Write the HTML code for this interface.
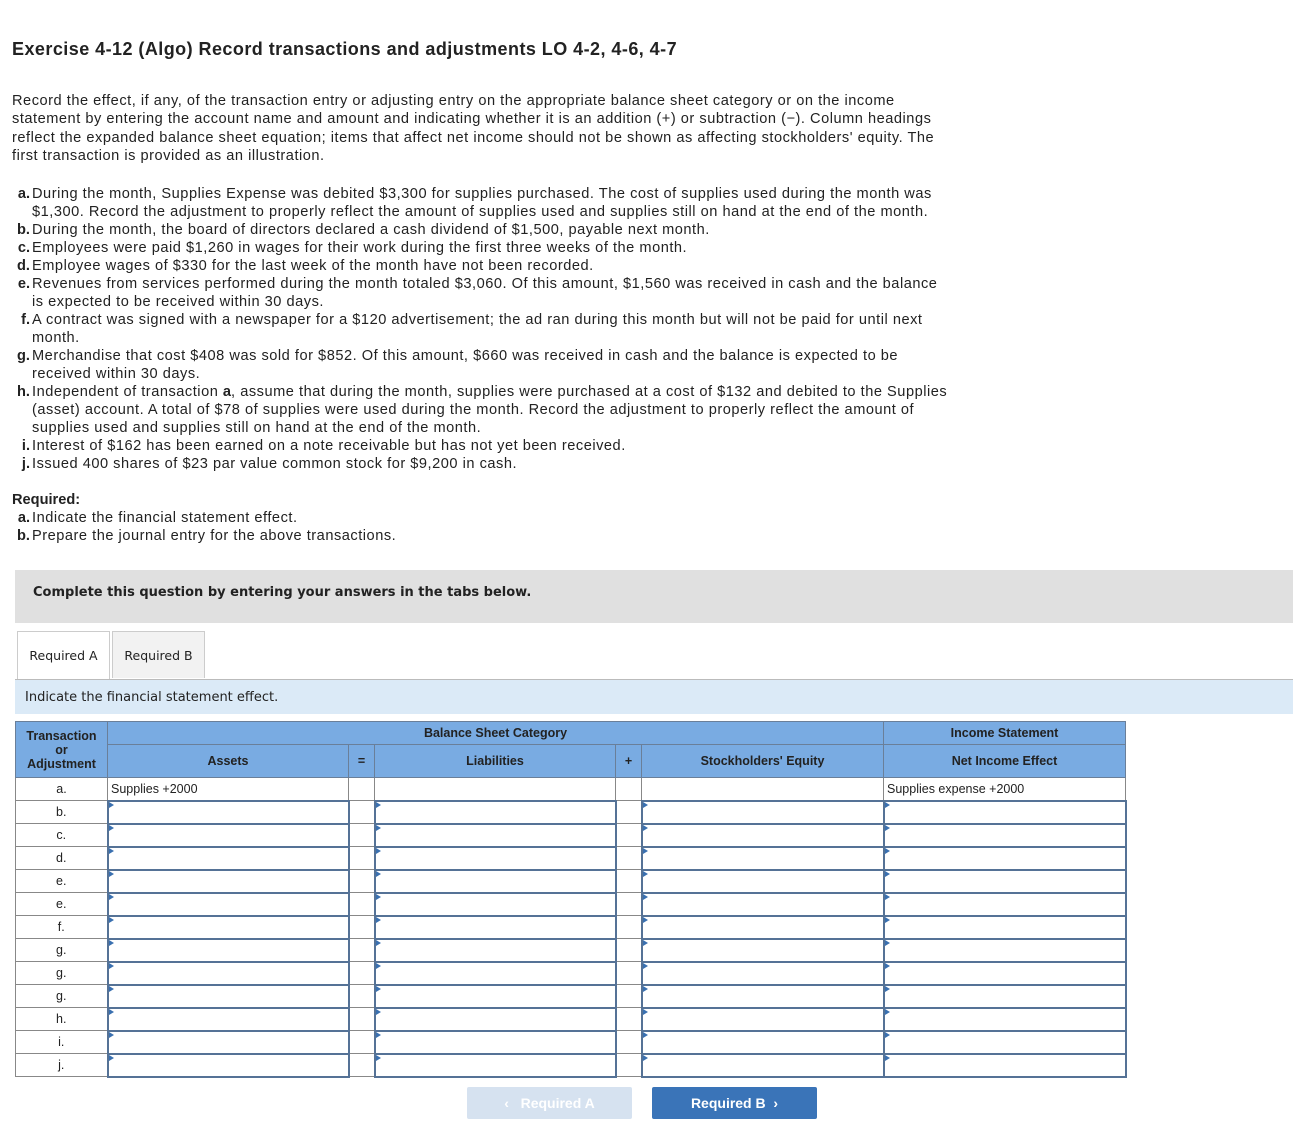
<!DOCTYPE html>
<html><head><meta charset="utf-8"><style>
body{margin:0;background:#fff;font-family:"Liberation Sans",Arial,sans-serif;color:#222;width:1310px;height:1133px;position:relative;overflow:hidden}
.a{position:absolute}
h1{position:absolute;left:12px;top:39px;margin:0;font-size:18px;font-weight:bold;color:#222;letter-spacing:0.45px;white-space:nowrap}
.p{position:absolute;left:12px;top:92px;width:1000px;font-size:14.6px;line-height:18.3px;white-space:nowrap;letter-spacing:0.52px}
.l{position:absolute;left:12px;top:185px;width:1000px;font-size:14.6px;line-height:18px;white-space:nowrap;letter-spacing:0.52px}
.l div{padding-left:20px;text-indent:-20px}
.l b{display:inline-block;width:20px;text-indent:0;text-align:right;box-sizing:border-box;padding-right:2px;letter-spacing:0}
.gray{left:15px;top:570px;width:1278px;height:53px;background:#e0e0e0}
.gray span{position:absolute;left:18px;top:15px;font-weight:bold;font-family:"DejaVu Sans",sans-serif;font-size:13px}
.tab{top:631px;height:47px;border:1px solid #ccc;border-bottom:none;font-family:"DejaVu Sans",sans-serif;font-size:12.5px;line-height:47px;text-align:center;box-sizing:border-box}
.blue{left:15px;top:679px;width:1278px;height:35px;background:#dbeaf7;border-top:1px solid #bbb;box-sizing:border-box}
.blue span{position:absolute;left:10px;top:10px;font-family:"DejaVu Sans",sans-serif;font-size:13px}
table{position:absolute;left:15px;top:721px;border-collapse:collapse;font-size:12.5px}
th{background:#79abe2;border:1px solid #6a7f99;font-weight:bold;color:#222;padding:0}
td{border:1px solid #888;height:22px;padding:0 3px;box-sizing:border-box}
td.c{text-align:center}
td.i{border:2px solid #557296;position:relative}
td.i:before{content:"";position:absolute;left:0;top:0;border-left:5px solid #3a70b0;border-top:3px solid transparent;border-bottom:3px solid transparent}
.btn{top:1087px;width:165px;height:32px;border-radius:2px;color:#fff;font-weight:bold;font-size:14px;line-height:32px;text-align:center}
</style></head><body>
<h1>Exercise 4-12 (Algo) Record transactions and adjustments LO 4-2, 4-6, 4-7</h1>
<div class="p">Record the effect, if any, of the transaction entry or adjusting entry on the appropriate balance sheet category or on the income<br>statement by entering the account name and amount and indicating whether it is an addition (+) or subtraction (−). Column headings<br>reflect the expanded balance sheet equation; items that affect net income should not be shown as affecting stockholders' equity. The<br>first transaction is provided as an illustration.</div>
<div class="l">
<div><b>a.</b>During the month, Supplies Expense was debited $3,300 for supplies purchased. The cost of supplies used during the month was<br>$1,300. Record the adjustment to properly reflect the amount of supplies used and supplies still on hand at the end of the month.</div>
<div><b>b.</b>During the month, the board of directors declared a cash dividend of $1,500, payable next month.</div>
<div><b>c.</b>Employees were paid $1,260 in wages for their work during the first three weeks of the month.</div>
<div><b>d.</b>Employee wages of $330 for the last week of the month have not been recorded.</div>
<div><b>e.</b>Revenues from services performed during the month totaled $3,060. Of this amount, $1,560 was received in cash and the balance<br>is expected to be received within 30 days.</div>
<div><b>f.</b>A contract was signed with a newspaper for a $120 advertisement; the ad ran during this month but will not be paid for until next<br>month.</div>
<div><b>g.</b>Merchandise that cost $408 was sold for $852. Of this amount, $660 was received in cash and the balance is expected to be<br>received within 30 days.</div>
<div><b>h.</b>Independent of transaction <b style="width:auto;padding:0">a</b>, assume that during the month, supplies were purchased at a cost of $132 and debited to the Supplies<br>(asset) account. A total of $78 of supplies were used during the month. Record the adjustment to properly reflect the amount of<br>supplies used and supplies still on hand at the end of the month.</div>
<div><b>i.</b>Interest of $162 has been earned on a note receivable but has not yet been received.</div>
<div><b>j.</b>Issued 400 shares of $23 par value common stock for $9,200 in cash.</div>
<div style="margin-top:18px;padding-left:0;text-indent:0"><b style="width:auto;text-align:left">Required:</b></div>
<div><b>a.</b>Indicate the financial statement effect.</div>
<div><b>b.</b>Prepare the journal entry for the above transactions.</div>
</div>
<div class="a gray"><span>Complete this question by entering your answers in the tabs below.</span></div>
<div class="a tab" style="left:17px;width:93px;background:#fff;height:48px">Required A</div>
<div class="a tab" style="left:112px;width:93px;background:#f2f2f2">Required B</div>
<div class="a blue"><span>Indicate the financial statement effect.</span></div>
<table>
<colgroup><col style="width:92px"><col style="width:241px"><col style="width:26px"><col style="width:241px"><col style="width:26px"><col style="width:242px"><col style="width:242px"></colgroup>
<tr style="height:23px"><th rowspan="2">Transaction<br>or<br>Adjustment</th><th colspan="5">Balance Sheet Category</th><th>Income Statement</th></tr>
<tr style="height:33px"><th>Assets</th><th>=</th><th>Liabilities</th><th>+</th><th>Stockholders' Equity</th><th>Net Income Effect</th></tr>
<tr style="height:23px"><td class="c">a.</td><td>Supplies +2000</td><td></td><td></td><td></td><td></td><td>Supplies expense +2000</td></tr>
<tr style="height:23px"><td class="c">b.</td><td class="i"></td><td></td><td class="i"></td><td></td><td class="i"></td><td class="i"></td></tr>
<tr style="height:23px"><td class="c">c.</td><td class="i"></td><td></td><td class="i"></td><td></td><td class="i"></td><td class="i"></td></tr>
<tr style="height:23px"><td class="c">d.</td><td class="i"></td><td></td><td class="i"></td><td></td><td class="i"></td><td class="i"></td></tr>
<tr style="height:23px"><td class="c">e.</td><td class="i"></td><td></td><td class="i"></td><td></td><td class="i"></td><td class="i"></td></tr>
<tr style="height:23px"><td class="c">e.</td><td class="i"></td><td></td><td class="i"></td><td></td><td class="i"></td><td class="i"></td></tr>
<tr style="height:23px"><td class="c">f.</td><td class="i"></td><td></td><td class="i"></td><td></td><td class="i"></td><td class="i"></td></tr>
<tr style="height:23px"><td class="c">g.</td><td class="i"></td><td></td><td class="i"></td><td></td><td class="i"></td><td class="i"></td></tr>
<tr style="height:23px"><td class="c">g.</td><td class="i"></td><td></td><td class="i"></td><td></td><td class="i"></td><td class="i"></td></tr>
<tr style="height:23px"><td class="c">g.</td><td class="i"></td><td></td><td class="i"></td><td></td><td class="i"></td><td class="i"></td></tr>
<tr style="height:23px"><td class="c">h.</td><td class="i"></td><td></td><td class="i"></td><td></td><td class="i"></td><td class="i"></td></tr>
<tr style="height:23px"><td class="c">i.</td><td class="i"></td><td></td><td class="i"></td><td></td><td class="i"></td><td class="i"></td></tr>
<tr style="height:23px"><td class="c">j.</td><td class="i"></td><td></td><td class="i"></td><td></td><td class="i"></td><td class="i"></td></tr>
</table>
<div class="a btn" style="left:467px;background:#d6e2f0">&lsaquo;&nbsp;&nbsp; Required A</div>
<div class="a btn" style="left:652px;background:#3a74b8">Required B &nbsp;&rsaquo;</div>
</body></html>
